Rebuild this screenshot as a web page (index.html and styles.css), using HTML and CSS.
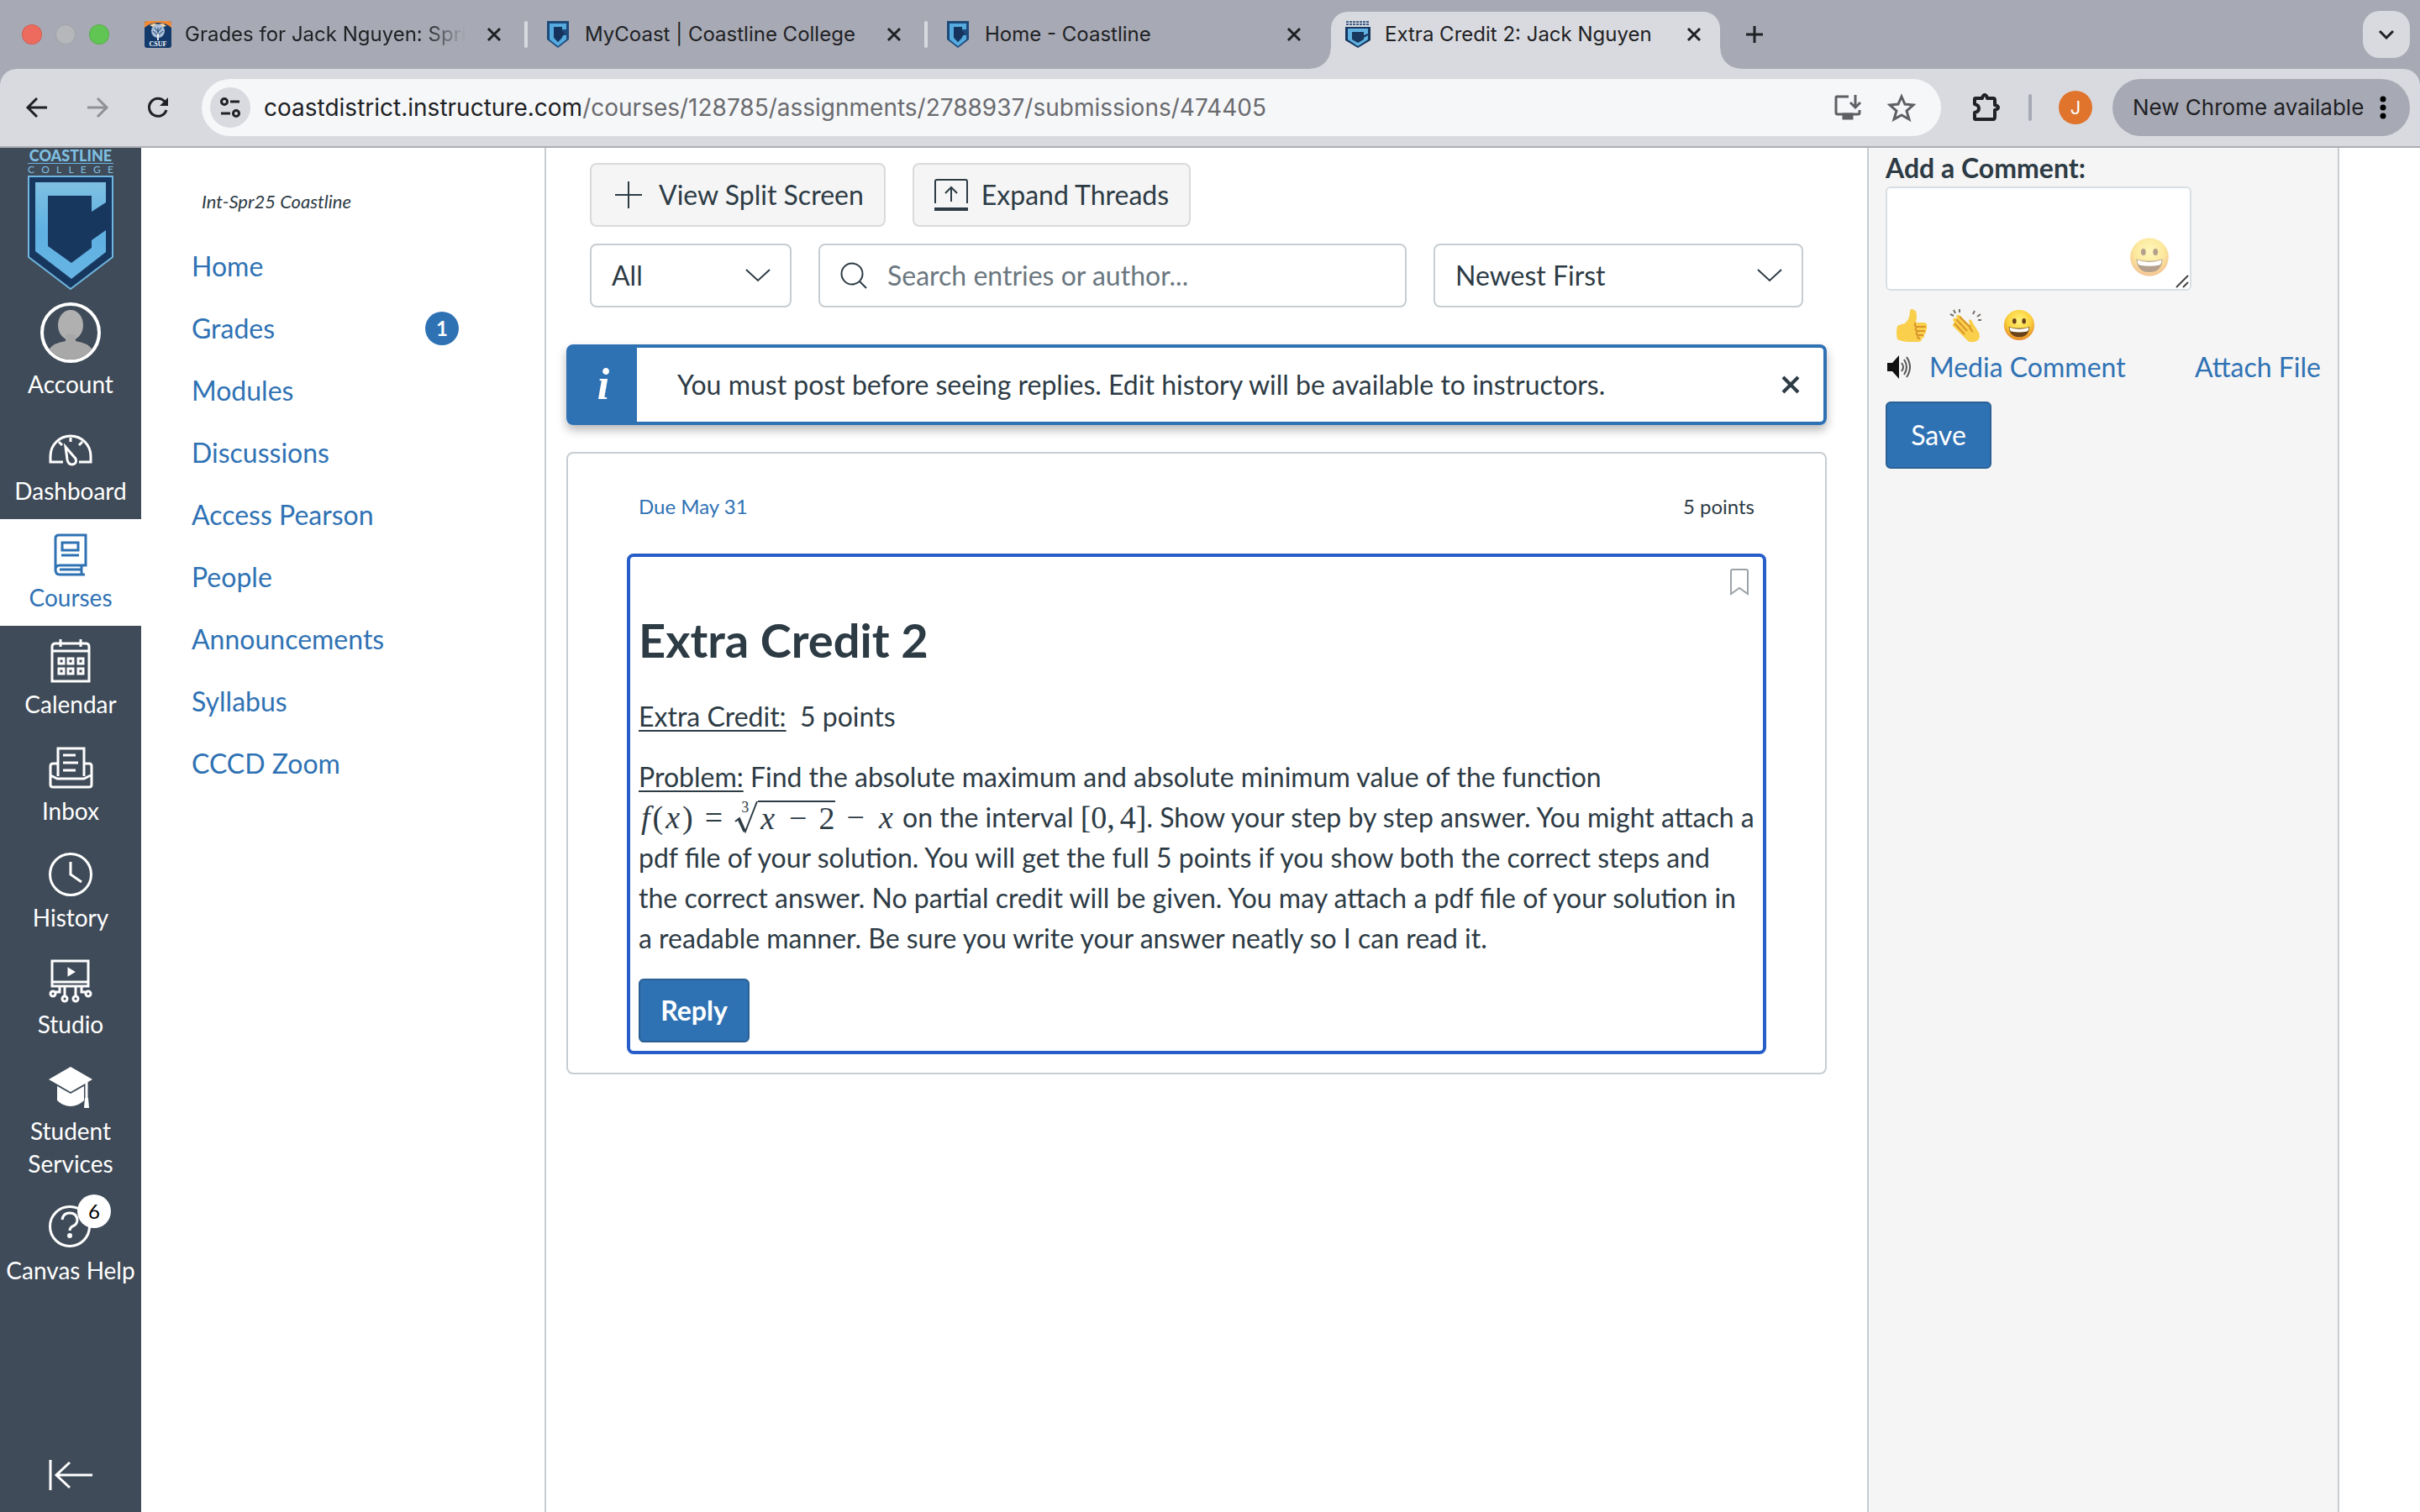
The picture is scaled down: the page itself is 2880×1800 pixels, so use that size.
FILE: index.html
```html
<!DOCTYPE html>
<html lang="en">
<head>
    <meta charset="UTF-8">
    <meta name="viewport" content="width=device-width, initial-scale=1.0">
    <title>Extra Credit 2: Jack Nguyen</title>
    <link rel="stylesheet" href="styles.css">
</head>
<body>
    <!-- shared symbols -->
    <svg class="symbols" width="0" height="0">
        <linearGradient id="shieldFill" x1="0" y1="0" x2="0" y2="1">
            <stop offset="0" stop-color="#7fc0e2"/>
            <stop offset="0.5" stop-color="#5fb1e2"/>
            <stop offset="1" stop-color="#66b4e3"/>
        </linearGradient>
        <radialGradient id="faceFill" cx="0.5" cy="0.35" r="0.65">
            <stop offset="0" stop-color="#fff27a"/>
            <stop offset="0.6" stop-color="#fbd23c"/>
            <stop offset="1" stop-color="#e8862a"/>
        </radialGradient>
        <symbol id="shield" viewBox="0 0 102 136">
            <path d="M1 1h100v96L51 135 1 97z" fill="#17375f" stroke="#6fb6e0" stroke-width="2"/>
            <path d="M9 8h84v24L76 43V24H24v60l28 20 24-18v-9l17-12v26L52 123 9 90z" fill="url(#shieldFill)"/>
        </symbol>
        <symbol id="shield-small" viewBox="0 0 26 32">
            <path d="M0 0h26v22L13 32 0 22z" fill="#1d4a7a"/>
            <path d="M3 3h20v7h-5V7H8v13l5 5 5-5v-3h5v5L13 30 3 22z" fill="#55aade"/>
            <path d="M8 7h10v5l3 3-3 4-5 6-5-6z" fill="#16335e"/>
        </symbol>
        <symbol id="close" viewBox="0 0 24 24">
            <path d="M5 5l14 14M19 5L5 19" stroke="currentColor" stroke-width="3" fill="none"/>
        </symbol>
        <symbol id="chevron" viewBox="0 0 30 16">
            <path d="M1 1l14 13L29 1" stroke="currentColor" stroke-width="2" fill="none"/>
        </symbol>
        <symbol id="smile" viewBox="0 0 40 40">
            <circle cx="20" cy="20" r="19" fill="url(#faceFill)"/>
            <ellipse cx="14" cy="15" rx="2.4" ry="3.4" fill="#6b431b"/>
            <ellipse cx="26" cy="15" rx="2.4" ry="3.4" fill="#6b431b"/>
            <path d="M7 22q13 4 26 0-1 13-13 13T7 22z" fill="#6b431b"/>
            <path d="M8 23q12 4 24 0 0 4-2 5-10 2-20 0-2-1-2-5z" fill="#fff"/>
        </symbol>
    </svg>

    <header class="browser">
        <div class="tab-strip">
            <div class="lights">
                <span class="light red"></span>
                <span class="light grey"></span>
                <span class="light green"></span>
            </div>
            <div class="tab">
                <svg class="favicon" viewBox="0 0 32 32">
                    <rect width="32" height="32" rx="3" fill="#143a6b"/>
                    <path d="M0 8V3q0-3 3-3h26q3 0 3 3v5Q26 2 16 2T0 8z" fill="#f08a36"/>
                    <path d="M6 5l5-2 5 1 6-1 4 3-4 1-6-2-6 2z" fill="#f9d9a8"/>
                    <circle cx="16" cy="12" r="8" fill="#a9bdd6"/>
                    <path d="M16 8v15M10 12l6 5 6-5M12 8l4 5 4-5M12 23h8" stroke="#143a6b" fill="none"/>
                    <path d="M15 15h2v8h-2z" fill="#e5ecf5"/>
                    <text x="16" y="30" font-size="8" font-weight="bold" text-anchor="middle" fill="#fff" font-family="Liberation Serif">CSUF</text>
                </svg>
                <span class="tab-title faded">Grades for Jack Nguyen: Spring</span>
                <button class="tab-close" aria-label="Close"><svg><use href="#close"/></svg></button>
                <span class="separator"></span>
            </div>
            <div class="tab">
                <svg class="favicon"><use href="#shield-small"/></svg>
                <span class="tab-title">MyCoast | Coastline College</span>
                <button class="tab-close" aria-label="Close"><svg><use href="#close"/></svg></button>
                <span class="separator"></span>
            </div>
            <div class="tab">
                <svg class="favicon"><use href="#shield-small"/></svg>
                <span class="tab-title">Home - Coastline</span>
                <button class="tab-close" aria-label="Close"><svg><use href="#close"/></svg></button>
            </div>
            <div class="tab active">
                <svg class="favicon" viewBox="0 0 32 32">
                    <path d="M2 1h28M2 4h28" stroke="#3f5f85" stroke-width="2" stroke-dasharray="3 1"/>
                    <path d="M1 7h30v16L16 32 1 23z" fill="#17375f"/>
                    <path d="M4 9h24v6l-5 2v-4H9v9l7 4 7-4v-2l5-3v5L16 30 4 22z" fill="#5fb1e2"/>
                </svg>
                <span class="tab-title">Extra Credit 2: Jack Nguyen</span>
                <button class="tab-close" aria-label="Close"><svg><use href="#close"/></svg></button>
            </div>
            <button class="new-tab" aria-label="New tab">
                <svg width="24" height="24" viewBox="0 0 24 24"><path d="M12 2v20M2 12h20" stroke="#202124" stroke-width="3"/></svg>
            </button>
            <button class="tab-search" aria-label="Search tabs">
                <svg width="20" height="12" viewBox="0 0 20 12"><path d="M2 2l8 8 8-8" stroke="#202124" stroke-width="3" fill="none"/></svg>
            </button>
        </div>

        <div class="toolbar">
            <button class="tool" aria-label="Back">
                <svg width="28" height="28" viewBox="0 0 28 28"><path d="M26 14H4M14 3L3 14l11 11" stroke="#202124" stroke-width="3" fill="none"/></svg>
            </button>
            <button class="tool" aria-label="Forward">
                <svg width="28" height="28" viewBox="0 0 28 28"><path d="M2 14h22M14 3l11 11-11 11" stroke="#8f9197" stroke-width="3" fill="none"/></svg>
            </button>
            <button class="tool" aria-label="Reload">
                <svg width="28" height="28" viewBox="0 0 28 28"><path d="M24 17a10.500 10.500 0 1 1-2-10l3 3" stroke="#202124" stroke-width="3" fill="none"/><path d="M26 2v10H16z" fill="#202124"/></svg>
            </button>
            <div class="address">
                <span class="site-info">
                    <svg width="26" height="26" viewBox="0 0 26 26" fill="none" stroke="#202124" stroke-width="3"><circle cx="6" cy="6" r="3.500"/><path d="M13 6h11M2 20h11"/><circle cx="20" cy="20" r="3.500"/></svg>
                </span>
                <span class="url">coastdistrict.instructure.com<span class="url-path">/courses/128785/assignments/2788937/submissions/474405</span></span>
                <svg width="34" height="34" viewBox="0 0 34 34" fill="none" stroke="#5f6064" stroke-width="3"><path d="M18 4H4q-1 0-1 1v18q0 2 2 2h24q2 0 2-2v-3"/><path d="M26 2v14M20 11l6 6 6-6"/><path d="M12 25h10v5H12z" fill="#5f6064"/></svg>
                <svg width="34" height="34" viewBox="0 0 34 34"><path d="M17 4l4 9 10 1-8 7 3 10-9-5-9 5 3-10-8-7 10-1z" fill="none" stroke="#5f6064" stroke-width="3"/></svg>
            </div>
            <svg class="puzzle" width="36" height="36" viewBox="0 0 36 36"><path d="M5 7h8q1-4 3-4t3 4h7q2 0 2 2v6q4 1 4 3t-4 3v8q0 3-2 3H5q-1 0-1-1v-7q5-1 5-5t-5-5V8q0-1 1-1z" fill="none" stroke="#202124" stroke-width="4" stroke-linejoin="round"/></svg>
            <span class="divider"></span>
            <span class="profile">J</span>
            <button class="update">New Chrome available
                <svg width="8" height="28" viewBox="0 0 8 28"><circle cx="4" cy="4" r="3.500"/><circle cx="4" cy="14" r="3.500"/><circle cx="4" cy="24" r="3.500"/></svg>
            </button>
        </div>
    </header>

    <div class="app">
        <nav class="global-nav">
            <a class="logo" href="#">
                <span class="logo-name">COASTLINE</span>
                <span class="logo-sub"><span>C</span><span>O</span><span>L</span><span>L</span><span>E</span><span>G</span><span>E</span></span>
                <svg width="102" height="136"><use href="#shield"/></svg>
            </a>
            <a class="nav-item" href="#">
                <span class="avatar">
                    <svg viewBox="0 0 64 64"><ellipse cx="32" cy="23" rx="15" ry="18" fill="#b0b0b0"/><path d="M26 34h12v8q14 2 20 10v12H6V52q6-8 20-10z" fill="#a8a8a8"/></svg>
                </span>
                Account
            </a>
            <a class="nav-item" href="#">
                <svg viewBox="0 0 52 52"><path d="M17 43H2v-7a24 24 0 0 1 48 0v7H36"/><path d="M26 14v5M12 19l4 4M40 19l-4 4"/><path d="M20 25l12 14q2 6-4 7-5 0-6-6z"/></svg>
                Dashboard
            </a>
            <a class="nav-item current" href="#">
                <svg viewBox="0 0 52 52"><path d="M8 45V7q0-4 4-4h32v36H13q-5 0-5 5 0 6 5 6h30M39 39v10M13 44h25"/><path d="M16 12h19v9H16zM15 27h21"/></svg>
                Courses
            </a>
            <a class="nav-item" href="#">
                <svg viewBox="0 0 52 52"><path d="M4 50V9q0-4 4-4h36q4 0 4 4v41zM4 14h44M14 0v9M38 0v9"/><path d="M12 23h6v6h-6zM23 23h6v6h-6zM35 23h6v6h-6zM12 35h6v6h-6zM23 35h6v6h-6zM35 35h6v6h-6z"/></svg>
                Calendar
            </a>
            <a class="nav-item" href="#">
                <svg viewBox="0 0 52 52"><path d="M11 36V3h31v33M11 21H5q-3 0-3 3v22q0 3 3 3h43q3 0 3-3V24q0-3-3-3h-6"/><path d="M2 35l8 4h32l8-4M17 11h15M17 20h18M17 29h15"/></svg>
                Inbox
            </a>
            <a class="nav-item" href="#">
                <svg viewBox="0 0 52 52"><circle cx="26" cy="26" r="24.500"/><path d="M26 11v15l13 9"/></svg>
                History
            </a>
            <a class="nav-item" href="#">
                <svg viewBox="0 0 52 52"><path d="M4 2h43v30H4zM4 27h43"/><path d="M13 32v7H8M19 32v11M32 32v11M39 32v7h5"/><circle cx="5" cy="41" r="3"/><circle cx="19" cy="47" r="3"/><circle cx="32" cy="47" r="3"/><circle cx="47" cy="41" r="3"/><path d="M24 12l5 3-5 3z" fill="#fff"/></svg>
                Studio
            </a>
            <a class="nav-item" href="#">
                <svg viewBox="0 0 52 52"><path d="M26 1l26 15-26 15L0 16z" fill="#fff" stroke="none"/><path d="M10 24l16 9 16-9v17q-7 7-16 7t-16-7z" fill="#fff" stroke="none"/><path d="M45 18v22"/><path d="M43 38h4l1 12h-6z" fill="#fff" stroke="none"/></svg>
                Student<br>Services
            </a>
            <a class="nav-item" href="#">
                <span class="badge help-badge">6</span>
                <svg viewBox="0 0 52 52"><circle cx="25" cy="25" r="23.500"/><path d="M16 17q1-8 9-8t9 8q0 6-6 8-3 2-3 5"/><circle cx="25" cy="36" r="1.500" fill="#fff"/></svg>
                Canvas Help
            </a>
            <button class="collapse" aria-label="Minimize navigation">
                <svg width="52" height="52" viewBox="0 0 52 52"><path d="M2 8v36M52 26H9M25 11L9 26l16 15" stroke="#fff" stroke-width="3" fill="none"/></svg>
            </button>
        </nav>

        <aside class="course-menu">
            <span class="term">Int-Spr25 Coastline</span>
            <ul>
                <li><a href="#">Home</a></li>
                <li><a href="#">Grades</a><span class="badge">1</span></li>
                <li><a href="#">Modules</a></li>
                <li><a href="#">Discussions</a></li>
                <li><a href="#">Access Pearson</a></li>
                <li><a href="#">People</a></li>
                <li><a href="#">Announcements</a></li>
                <li><a href="#">Syllabus</a></li>
                <li><a href="#">CCCD Zoom</a></li>
            </ul>
        </aside>

        <main class="content">
            <div class="controls">
                <div class="row">
                    <button class="btn">
                        <svg width="32" height="32" viewBox="0 0 32 32"><path d="M16 0v32M0 16h32"/></svg>
                        View Split Screen
                    </button>
                    <button class="btn btn-expand">
                        <svg width="40" height="38" viewBox="0 0 40 38"><path d="M1 29V3q0-2 2-2h34q2 0 2 2v26M0 35h40M0 37h40M20 27V10M13 17l7-7 7 7"/></svg>
                        Expand Threads
                    </button>
                </div>
                <div class="row">
                    <div class="select filter">
                        <select aria-label="Filter by"><option>All</option></select>
                        <svg><use href="#chevron"/></svg>
                    </div>
                    <label class="search">
                        <svg width="32" height="32" viewBox="0 0 32 32"><circle cx="14" cy="14" r="12.500"/><path d="M23 23l8 8"/></svg>
                        <input type="text" placeholder="Search entries or author..." aria-label="Search entries or author">
                    </label>
                    <div class="select sort">
                        <select aria-label="Sort by"><option>Newest First</option></select>
                        <svg><use href="#chevron"/></svg>
                    </div>
                </div>
            </div>

            <div class="alert">
                <span class="alert-icon">i</span>
                <span class="alert-text">You must post before seeing replies. Edit history will be available to instructors.</span>
                <button class="alert-close" aria-label="Close">
                    <svg width="22" height="22" viewBox="0 0 22 22"><path d="M2 2l18 18M20 2L2 20" stroke="#2d3b45" stroke-width="4"/></svg>
                </button>
            </div>

            <section class="card">
                <div class="card-head">
                    <a href="#">Due May 31</a>
                    <span>5 points</span>
                </div>
                <article class="post">
                    <svg class="bookmark" width="22" height="32" viewBox="0 0 22 32"><path d="M1 30V3q0-2 2-2h16q2 0 2 2v27l-10-7z" fill="none" stroke="#9ba3a9" stroke-width="2"/></svg>
                    <h1>Extra Credit 2</h1>
                    <p><u>Extra Credit:</u>&nbsp; 5 points</p>
                    <p><u>Problem:</u> Find the absolute maximum and absolute minimum value of the function
                        <span class="math"><i>f</i>(<i>x</i>)<span class="op">=</span><span class="root"><sup>3</sup><svg width="28" height="40" viewBox="0 0 28 40"><path d="M1 25l5-4 7 16L27 1" fill="none" stroke="#2d3b45" stroke-width="2"/><path d="M5 22l7 15" stroke="#2d3b45" stroke-width="3"/></svg><span class="radicand"><i>x</i><span class="op">−</span>2</span></span><span class="op">−</span><i>x</i></span>
                        on the interval <span class="math">[0,<span class="thin"></span>4]</span>. Show your step by step answer. You might attach a pdf file of your solution. You will get the full 5 points if you show both the correct steps and the correct answer. No partial credit will be given. You may attach a pdf file of your solution in a readable manner. Be sure you write your answer neatly so I can read it.</p>
                    <button class="btn-primary reply">Reply</button>
                </article>
            </section>
        </main>

        <aside class="comments">
            <label for="comment">Add a Comment:</label>
            <div class="comment-box">
                <textarea id="comment"></textarea>
                <svg class="picker" width="48" height="48"><use href="#smile"/></svg>
                <svg class="grip" width="16" height="16" viewBox="0 0 16 16"><path d="M1 15L15 1M9 15l6-6" stroke="#444" stroke-width="2"/></svg>
            </div>
            <div class="emojis">
                <svg width="38" height="40" viewBox="0 0 38 40">
                    <path d="M2 20q4-2 9-3 6-5 6-15 0-2 3-2 5 1 5 8 0 5-1 8h10q4 1 3 5 1 3-1 4 1 4-2 5 1 4-3 5 0 4-4 4H16Q8 39 2 36q-2-8 0-16z" fill="#f9cf4c"/>
                    <path d="M24 16q-3 4 1 5h11M25 21q-3 5 1 5h9M26 26q-3 5 1 5h6M27 31q-2 4 2 4" fill="none" stroke="#d9952b" stroke-width="2"/>
                </svg>
                <svg width="38" height="40" viewBox="0 0 38 40">
                    <path d="M4 12q2-3 5 0l-1-4q3-3 6 1l10 10-1-6q3-2 4 2l8 13q2 6-1 9-6 4-12 1L4 20q-1-3 2-3l-2-5z" fill="#f9cf4c"/>
                    <path d="M8 12l13 14M6 17l12 13M12 9l13 13M24 19q0 5 4 8" fill="none" stroke="#d9952b" stroke-width="2"/>
                    <path d="M1 6l4 2M5 1l2 4M12 0v4M28 6l2-4M33 9l4-3M34 13h4" stroke="#77716b" stroke-width="2"/>
                </svg>
                <svg width="38" height="38"><use href="#smile"/></svg>
            </div>
            <div class="attach">
                <a class="media" href="#">
                    <svg width="32" height="32" viewBox="0 0 32 32"><path d="M2 11h6l8-9v28l-8-9H2z" fill="#111"/><path d="M19 11q4 5 0 10M22 7q6 9 0 18M25 4q8 12 0 24" fill="none" stroke="#555" stroke-width="2"/></svg>
                    Media Comment
                </a>
                <a href="#">Attach File</a>
            </div>
            <button class="btn-primary save">Save</button>
        </aside>
    </div>
</body>
</html>
```

FILE: styles.css
```css
* {
    box-sizing: border-box;
}

body {
    margin: 0;
    min-height: 100vh;
    display: flex;
    flex-direction: column;
    font-family: Lato, "Liberation Sans", sans-serif;
    font-size: 32px;
    line-height: 48px;
    color: #2d3b45;
    background: #fff;
}

a {
    color: #2f72b4;
    text-decoration: none;
}

button, select, input, textarea {
    font: inherit;
    color: inherit;
}

button {
    border: none;
    background: none;
    padding: 0;
    cursor: pointer;
}

.symbols {
    position: absolute;
}

/* browser window */
.browser {
    background: #a7a9b4;
    border-bottom: 2px solid #adafb4;
    font-family: Inter, Roboto, sans-serif;
    color: #202124;
}

.tab-strip {
    display: flex;
    align-items: center;
    height: 82px;
    padding: 0 12px 0 26px;
}

.lights {
    display: flex;
    gap: 16px;
    margin-right: 20px;
}

.light {
    width: 24px;
    height: 24px;
    border-radius: 50%;
    border: 1px solid rgba(0, 0, 0, 0.1);
}

.red {
    background: #ed6a5e;
}

.grey {
    background: #b6b7bb;
}

.green {
    background: #61c554;
}

.tab {
    position: relative;
    flex: 0 1 476px;
    min-width: 0;
    display: flex;
    align-items: center;
    gap: 16px;
    height: 54px;
    padding: 0 26px 0 22px;
    font-size: 24px;
    line-height: 32px;
}

.favicon {
    flex: none;
    width: 32px;
    height: 32px;
}

.tab-title {
    flex: 1;
    white-space: nowrap;
    overflow: hidden;
}

.faded {
    margin-right: 6px;
    -webkit-mask-image: linear-gradient(to right, #000 85%, transparent);
    mask-image: linear-gradient(to right, #000 85%, transparent);
}

.tab-close, .tab-close svg {
    display: block;
    width: 24px;
    height: 24px;
}

.separator {
    position: absolute;
    right: -2px;
    width: 4px;
    height: 32px;
    border-radius: 2px;
    background: #d9dadf;
}

.active {
    flex-basis: 463px;
    align-self: flex-end;
    height: 68px;
    margin: 0 7px 0 6px;
    padding: 0 19px 14px 16px;
    border-radius: 20px 20px 0 0;
    background: #d9dadf;
}

.active::before, .active::after {
    content: "";
    position: absolute;
    bottom: 0;
    width: 24px;
    height: 24px;
}

.active::before {
    left: -24px;
    background: radial-gradient(circle at 0 0, transparent 23px, #d9dadf 24px);
}

.active::after {
    right: -24px;
    background: radial-gradient(circle at 100% 0, transparent 23px, #d9dadf 24px);
}

.new-tab {
    display: flex;
    margin-left: 22px;
}

.tab-search {
    display: flex;
    align-items: center;
    justify-content: center;
    width: 56px;
    height: 56px;
    margin-left: auto;
    border-radius: 20px;
    background: #d9dadf;
}

.toolbar {
    display: flex;
    align-items: center;
    height: 92px;
    padding: 0 12px 0 30px;
    border-radius: 20px 20px 0 0;
    background: #d9dadf;
}

.tool {
    display: flex;
    margin-right: 44px;
}

.address {
    flex: 1;
    display: flex;
    align-items: center;
    gap: 30px;
    height: 68px;
    margin-left: -6px;
    padding: 0 30px 0 10px;
    border-radius: 34px;
    background: #f6f7f9;
}

.site-info {
    display: flex;
    align-items: center;
    justify-content: center;
    width: 48px;
    height: 48px;
    margin-right: -14px;
    border-radius: 50%;
    background: #d9dadf;
}

.url {
    flex: 1;
    font-size: 28px;
    white-space: nowrap;
}

.url-path {
    color: #6a6b6f;
}

.puzzle {
    margin: 0 32px 0 36px;
}

.divider {
    width: 4px;
    height: 32px;
    border-radius: 2px;
    background: #a7a9b4;
}

.profile {
    width: 40px;
    height: 40px;
    margin: 0 24px 0 32px;
    border-radius: 50%;
    background: #e0742c;
    color: #fff;
    font-size: 22px;
    line-height: 40px;
    text-align: center;
}

.update {
    display: flex;
    align-items: center;
    justify-content: space-between;
    width: 354px;
    height: 68px;
    padding: 0 28px 0 24px;
    border-radius: 34px;
    background: #a7a9b4;
    font-size: 26px;
    white-space: nowrap;
}

/* global navigation */
.app {
    flex: 1;
    display: flex;
    padding-right: 96px;
}

.global-nav {
    flex: none;
    width: 168px;
    display: flex;
    flex-direction: column;
    background: #3f4b58;
}

.logo {
    display: flex;
    flex-direction: column;
    align-items: center;
    height: 168px;
    color: #7fc0e2;
}

.logo svg {
    flex: none;
}

.logo-name {
    width: 102px;
    height: 19px;
    border-bottom: 1px solid #6fb6e0;
    font-size: 18px;
    font-weight: 900;
    line-height: 18px;
    text-align: center;
}

.logo-sub {
    display: flex;
    justify-content: space-between;
    width: 102px;
    height: 14px;
    font-size: 12px;
    line-height: 14px;
}

.nav-item {
    position: relative;
    display: flex;
    flex-direction: column;
    align-items: center;
    padding: 16px 0 14px;
    color: #fff;
    font-size: 28px;
    line-height: 39px;
    text-align: center;
    white-space: nowrap;
}

.nav-item > svg {
    width: 52px;
    height: 52px;
    margin-bottom: 6px;
    overflow: visible;
    fill: none;
    stroke: currentColor;
    stroke-width: 3;
}

.current {
    background: #fff;
    color: #2f72b4;
}

.avatar {
    width: 72px;
    height: 72px;
    margin-bottom: 6px;
    border: 4px solid #fff;
    border-radius: 50%;
    overflow: hidden;
}

.avatar svg {
    display: block;
}

.badge {
    width: 40px;
    height: 40px;
    border-radius: 50%;
    background: #2f72b4;
    color: #fff;
    font-size: 24px;
    font-weight: bold;
    line-height: 40px;
    text-align: center;
}

.help-badge {
    position: absolute;
    top: 3px;
    left: 92px;
    background: #fff;
    color: #000;
    font-weight: normal;
}

.collapse {
    display: flex;
    justify-content: center;
    margin-top: auto;
    padding-bottom: 18px;
}

/* course menu */
.course-menu {
    flex: none;
    width: 482px;
    padding: 40px 102px 0 60px;
    border-right: 2px solid #c7cdd1;
}

.term {
    display: block;
    padding-left: 12px;
    font-size: 22px;
    font-style: italic;
}

.course-menu ul {
    list-style: none;
    margin: 16px 0 0;
    padding: 0;
}

.course-menu li {
    display: flex;
    align-items: center;
    justify-content: space-between;
    height: 74px;
}

/* discussion */
.content {
    flex: 1;
    min-width: 0;
    padding: 18px 48px 0 24px;
}

.controls {
    display: flex;
    flex-direction: column;
    gap: 20px;
    padding: 0 28px;
    margin-bottom: 44px;
}

.row {
    display: flex;
    gap: 32px;
}

.btn {
    display: flex;
    align-items: center;
    gap: 20px;
    height: 76px;
    padding: 0 24px 0 28px;
    border: 2px solid #d9dadb;
    border-radius: 8px;
    background: #f5f5f5;
    white-space: nowrap;
}

.btn-expand {
    gap: 16px;
    padding: 0 24px;
}

.btn svg, .search svg {
    fill: none;
    stroke: #2d3b45;
    stroke-width: 2;
}

.select {
    position: relative;
    display: flex;
}

.select select {
    width: 100%;
    height: 76px;
    padding: 0 24px;
    border: 2px solid #c7cdd1;
    border-radius: 8px;
    background: #fff;
    appearance: none;
}

.select svg {
    position: absolute;
    right: 25px;
    top: 30px;
    width: 30px;
    height: 16px;
    pointer-events: none;
}

.filter {
    width: 240px;
}

.sort {
    width: 440px;
}

.search {
    flex: 1;
    display: flex;
    align-items: center;
    gap: 24px;
    height: 76px;
    padding: 0 24px;
    border: 2px solid #c7cdd1;
    border-radius: 8px;
}

.search input {
    flex: 1;
    border: none;
    outline: none;
    padding: 0;
    background: none;
}

.search input::placeholder {
    color: #6b7780;
}

.alert {
    display: flex;
    align-items: center;
    height: 96px;
    border: 4px solid #2f72b4;
    border-radius: 8px;
    box-shadow: 0 6px 12px rgba(0, 0, 0, 0.28);
}

.alert-icon {
    align-self: stretch;
    width: 80px;
    background: #2f72b4;
    color: #fff;
    font-family: "Liberation Serif", serif;
    font-size: 52px;
    font-style: italic;
    font-weight: bold;
    line-height: 88px;
    text-align: center;
}

.alert-text {
    flex: 1;
    padding-left: 48px;
}

.alert-close {
    display: flex;
    margin-right: 28px;
}

.card {
    margin-top: 32px;
    padding: 39px 70px 22px;
    border: 2px solid #c7cdd1;
    border-radius: 8px;
}

.card-head {
    display: flex;
    justify-content: space-between;
    padding: 0 14px;
    margin-bottom: 32px;
    font-size: 24px;
}

.post {
    position: relative;
    padding: 64px 10px 10px;
    border: 4px solid #265dc8;
    border-radius: 8px;
}

.bookmark {
    position: absolute;
    top: 14px;
    right: 17px;
}

.post h1 {
    margin: 0 0 32px;
    font-size: 56px;
    line-height: 70px;
}

.post p {
    margin: 0 0 24px;
}

.post u {
    text-underline-offset: 4px;
    text-decoration-thickness: 2px;
    text-decoration-skip-ink: none;
}

/* formulas */
.math {
    display: inline-flex;
    height: 48px;
    vertical-align: top;
    font-family: "Liberation Serif", serif;
    font-size: 38px;
}

.math i {
    margin: 0 3px;
}

.op {
    margin: 0 14px;
}

.root {
    display: inline-flex;
    position: relative;
}

.root svg {
    margin-top: 4px;
}

.root sup {
    position: absolute;
    left: 8px;
    top: 2px;
    font-size: 18px;
    line-height: 20px;
}

.radicand {
    display: flex;
    height: 42px;
    margin-top: 4px;
    border-top: 2px solid #2d3b45;
    line-height: 38px;
}

.thin {
    width: 6px;
}

.btn-primary {
    height: 76px;
    border: 2px solid #2a5f93;
    border-radius: 6px;
    background: #2f72b4;
    color: #fff;
}

.reply {
    display: block;
    width: 132px;
    font-weight: bold;
}

/* comments */
.comments {
    flex: none;
    width: 562px;
    padding: 0 20px;
    border: solid #c7cdd1;
    border-width: 0 2px;
    background: #f5f5f5;
}

.comments label {
    display: block;
    height: 46px;
    font-weight: bold;
}

.comment-box {
    position: relative;
    width: 364px;
}

.comment-box textarea {
    display: block;
    width: 100%;
    height: 124px;
    border: 2px solid #d8dfe4;
    border-radius: 6px;
    background: #fff;
    resize: none;
}

.picker {
    position: absolute;
    right: 26px;
    bottom: 16px;
    opacity: 0.5;
}

.grip {
    position: absolute;
    right: 3px;
    bottom: 3px;
}

.emojis {
    display: flex;
    gap: 26px;
    padding: 22px 12px 5px;
}

.attach {
    display: flex;
    justify-content: space-between;
}

.media {
    display: flex;
    align-items: center;
    gap: 20px;
}

.save {
    display: block;
    width: 126px;
    height: 80px;
    margin-top: 17px;
}
```
